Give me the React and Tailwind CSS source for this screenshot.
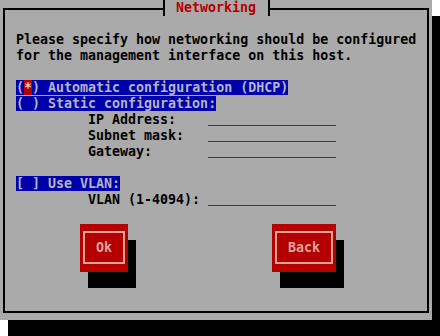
export default function App() {
  const mono = { fontFamily: '"DejaVu Sans Mono", "Liberation Mono", monospace' };
  const Field = () => <div className="w-[128px] h-[14px] border-b border-[#2a2ac8]" />;
  const Btn = ({ label, w }) => (
    <div className={`${w} h-[48px] bg-[#b40000] shadow-[8px_16px_0_0_#000] pt-[7px] pb-[8px] px-[3px]`}>
      <div className="h-full border-2 border-[#dca49c] flex items-center justify-center text-[#dca49c]">{label}</div>
    </div>
  );
  return (
    <div className="w-[440px] h-[336px] bg-white text-[13.3px] font-bold leading-[16px] text-black" style={mono}>
      <div className="relative w-[432px] h-[320px] bg-[#aaaaaa] shadow-[8px_16px_0_0_#000] pl-[3px] pr-[3px] pt-[8px] pb-[7px]">
        <div className="absolute left-[163px] top-0 h-[16px] w-[107px] bg-[#aaaaaa] border-x-2 border-black pl-[11px] text-[#b40000]">
          Networking
        </div>
        <div className="h-full border-2 border-black pl-[11px] pt-[22px] whitespace-pre">
          <div>Please specify how networking should be configured</div>
          <div>for the management interface on this host.</div>
          <div className="h-[16px]" />
          <div>
            <span className="bg-[#0000aa] text-[#b4b4c4]">(<span className="bg-[#b40000] text-[#f0c8c8]">*</span>) Automatic configuration (DHCP)</span>
          </div>
          <div>
            <span className="bg-[#0000aa] text-[#b4b4c4]">( ) Static configuration:</span>
          </div>
          <div className="flex pl-[72px]"><div className="w-[120px]">IP Address:</div><Field /></div>
          <div className="flex pl-[72px]"><div className="w-[120px]">Subnet mask:</div><Field /></div>
          <div className="flex pl-[72px]"><div className="w-[120px]">Gateway:</div><Field /></div>
          <div className="h-[16px]" />
          <div>
            <span className="bg-[#0000aa] text-[#b4b4c4]">[ ] Use VLAN:</span>
          </div>
          <div className="flex pl-[72px]"><div className="w-[120px]">VLAN (1-4094):</div><Field /></div>
          <div className="h-[16px]" />
          <div className="flex pl-[64px] gap-[144px]">
            <Btn label="Ok" w="w-[48px]" />
            <Btn label="Back" w="w-[64px]" />
          </div>
        </div>
      </div>
    </div>
  );
}
